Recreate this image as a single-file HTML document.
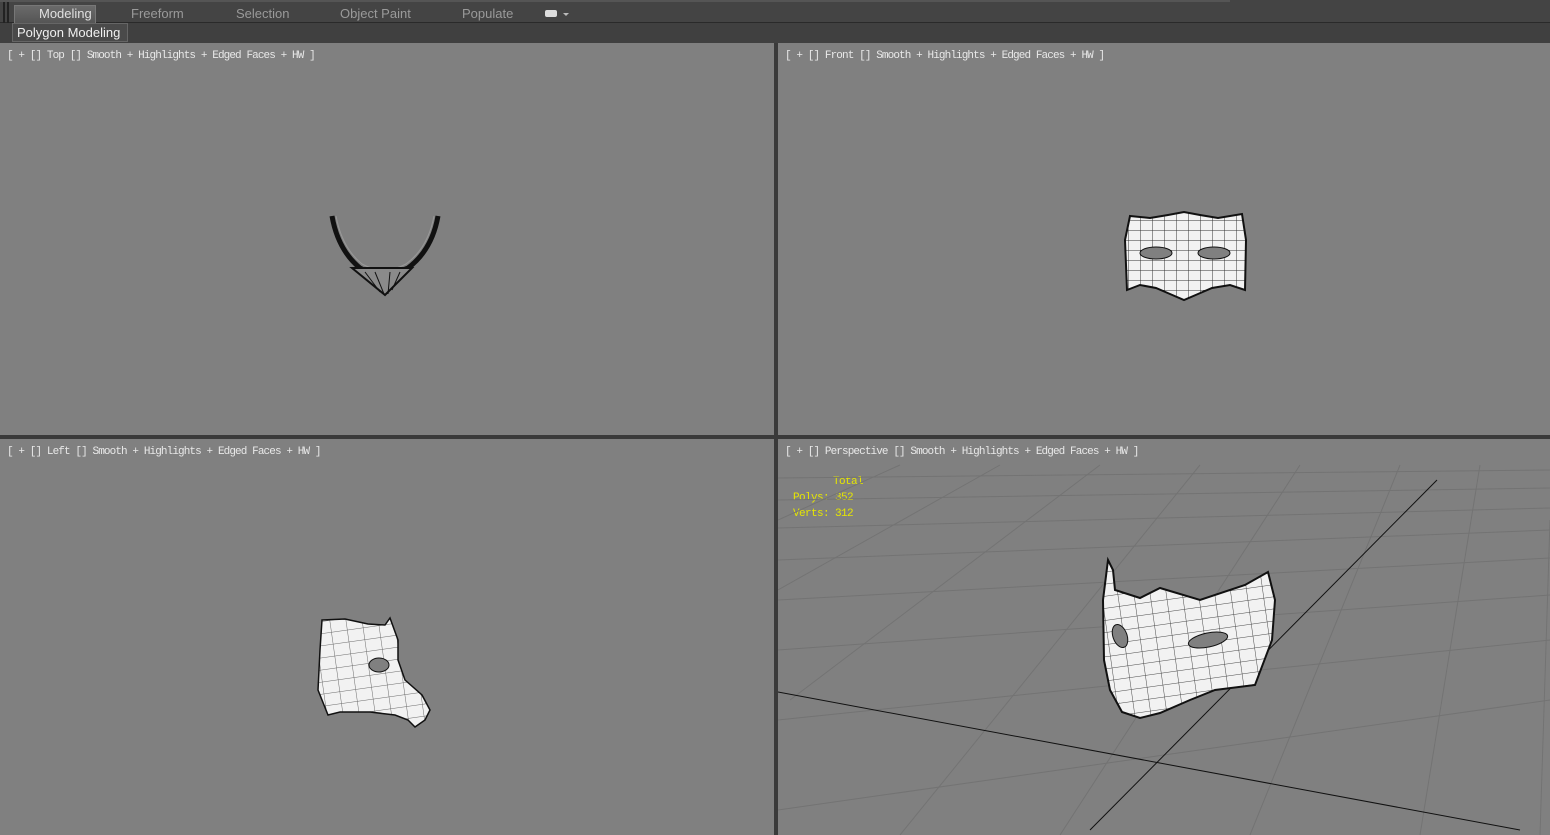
<!DOCTYPE html>
<html><head><meta charset="utf-8"><style>
*{margin:0;padding:0;box-sizing:border-box}
body{width:1550px;height:835px;background:#3a3a3a;position:relative;overflow:hidden;font-family:"Liberation Sans",sans-serif}
.bar1{position:absolute;left:0;top:0;width:1550px;height:23px;background:#444;border-bottom:1px solid #2a2a2a}
.bar2{position:absolute;left:0;top:23px;width:1550px;height:20px;background:#404040}
.tab{position:absolute;top:6px;font-size:13px;color:#9a9a9a}
.vp{position:absolute;background:#808080;overflow:hidden}
.lbl{position:absolute;left:7px;top:7px;font-family:"Liberation Mono",monospace;font-size:11px;color:#e8e8e8;white-space:pre;letter-spacing:-0.9px}
.stat{position:absolute;font-family:"Liberation Mono",monospace;font-size:11px;color:#e6e600;letter-spacing:-0.6px}
</style></head><body>
<div class="bar1">
 <div style="position:absolute;left:3px;top:2px;width:2px;height:38px;background:#222"></div>
 <div style="position:absolute;left:7px;top:2px;width:2px;height:38px;background:#222"></div>
 <div style="position:absolute;left:14px;top:5px;width:82px;height:18px;background:linear-gradient(#6a6a6a,#555);border:1px solid #777;border-bottom:none"></div>
 <div class="tab" style="left:39px;color:#e0e0e0">Modeling</div>
 <div class="tab" style="left:131px">Freeform</div>
 <div class="tab" style="left:236px">Selection</div>
 <div class="tab" style="left:340px">Object Paint</div>
 <div class="tab" style="left:462px">Populate</div>
 <div style="position:absolute;left:545px;top:10px;width:12px;height:7px;background:#ddd;border-radius:2px"></div>
 <div style="position:absolute;left:563px;top:13px;width:0;height:0;border-left:3px solid transparent;border-right:3px solid transparent;border-top:3px solid #bbb"></div>
 <div style="position:absolute;left:0;top:0;width:1230px;height:2px;background:#555"></div>
</div>
<div class="bar2">
 <div style="position:absolute;left:12px;top:0;width:116px;height:19px;background:#4a4a4a;border:1px solid #666"></div>
 <div style="position:absolute;left:17px;top:2px;font-size:13px;color:#f0f0f0">Polygon Modeling</div>
</div>

<div class="vp" style="left:0;top:43px;width:774px;height:392px"><div class="lbl">[ + [] Top [] Smooth + Highlights + Edged Faces + HW ]</div></div>
<div class="vp" style="left:778px;top:43px;width:772px;height:392px"><div class="lbl">[ + [] Front [] Smooth + Highlights + Edged Faces + HW ]</div></div>
<div class="vp" style="left:0;top:439px;width:774px;height:396px"><div class="lbl">[ + [] Left [] Smooth + Highlights + Edged Faces + HW ]</div></div>
<div class="vp" style="left:778px;top:439px;width:772px;height:396px"><div class="lbl">[ + [] Perspective [] Smooth + Highlights + Edged Faces + HW ]</div>
 <div class="stat" style="left:55px;top:37px">Total</div>
 <div class="stat" style="left:15px;top:53px">Polys: 352</div>
 <div class="stat" style="left:15px;top:69px">Verts: 312</div>
</div>

<svg width="1550" height="835" style="position:absolute;left:0;top:0">
<defs>
 <clipPath id="persp"><rect x="778" y="460" width="772" height="375"/></clipPath>
 <pattern id="g" width="12" height="10" patternUnits="userSpaceOnUse"><path d="M0 0H12M0 0V10" stroke="#111" stroke-width="1" fill="none"/></pattern>
 <pattern id="g2" width="16" height="12" patternUnits="userSpaceOnUse" patternTransform="rotate(-8)"><path d="M0 0H16M0 0V12" stroke="#111" stroke-width="1" fill="none"/></pattern>
</defs>
<g clip-path="url(#persp)" stroke="#737373" stroke-width="1" fill="none">
 <path d="M778 478 L1550 470"/><path d="M778 500 L1550 488"/><path d="M778 528 L1550 508"/><path d="M778 560 L1550 530"/><path d="M778 600 L1550 558"/><path d="M778 650 L1550 595"/><path d="M778 720 L1550 640"/><path d="M778 810 L1550 700"/>
 <path d="M900 465 L778 520"/><path d="M1000 465 L778 590"/><path d="M1100 465 L790 700"/><path d="M1200 465 L900 835"/><path d="M1300 465 L1060 835"/><path d="M1400 465 L1250 835"/><path d="M1480 465 L1420 835"/><path d="M1550 520 L1540 835"/>
</g>
<g clip-path="url(#persp)" stroke="#111" stroke-width="1">
 <path d="M778 692 L1520 830"/><path d="M1437 480 L1090 830"/>
</g>
<g fill="none" stroke="#111">
 <path d="M332 216 Q338 250 360 268 Q380 280 408 268 Q432 250 438 216" stroke-width="5"/>
 <path d="M336 216 Q342 248 362 264 Q384 276 406 264 Q428 248 434 216" stroke="#999" stroke-width="1"/>
 <path d="M352 268 L385 295 L412 268 Z" fill="#8a8a8a" stroke-width="2"/>
 <path d="M365 272 L380 292 M375 272 L384 294 M390 272 L388 294 M400 272 L392 290" stroke-width="1"/>
</g>
<path d="M1130 216 L1150 218 L1168 215 L1184 212 L1200 215 L1218 218 L1242 214 L1246 240 L1245 290 L1230 285 L1212 288 L1198 294 L1184 300 L1170 294 L1156 288 L1140 285 L1127 290 L1125 240 Z" fill="#f2f2f2" stroke="#111" stroke-width="2"/>
<path d="M1130 216 L1150 218 L1168 215 L1184 212 L1200 215 L1218 218 L1242 214 L1246 240 L1245 290 L1230 285 L1212 288 L1198 294 L1184 300 L1170 294 L1156 288 L1140 285 L1127 290 L1125 240 Z" fill="url(#g)" opacity="0.85"/>
<ellipse cx="1156" cy="253" rx="16" ry="6" fill="#808080" stroke="#111"/>
<ellipse cx="1214" cy="253" rx="16" ry="6" fill="#808080" stroke="#111"/>
<path d="M322 620 L345 619 L368 624 L385 625 L390 618 L398 640 L398 660 L405 680 L422 695 L430 710 L425 720 L415 727 L408 720 L395 715 L370 712 L340 712 L328 715 L318 690 L320 650 Z" fill="#f2f2f2" stroke="#111" stroke-width="1.5"/>
<path d="M322 620 L345 619 L368 624 L385 625 L390 618 L398 640 L398 660 L405 680 L422 695 L430 710 L425 720 L415 727 L408 720 L395 715 L370 712 L340 712 L328 715 L318 690 L320 650 Z" fill="url(#g2)" opacity="0.6"/>
<ellipse cx="379" cy="665" rx="10" ry="7" fill="#808080" stroke="#111"/>
<path d="M1108 560 L1113 570 L1115 590 L1140 598 L1160 588 L1200 600 L1245 585 L1268 572 L1275 600 L1272 640 L1255 685 L1215 690 L1190 700 L1160 713 L1140 718 L1122 712 L1110 690 L1104 660 L1103 600 Z" fill="#f2f2f2" stroke="#111" stroke-width="2"/>
<path d="M1108 560 L1113 570 L1115 590 L1140 598 L1160 588 L1200 600 L1245 585 L1268 572 L1275 600 L1272 640 L1255 685 L1215 690 L1190 700 L1160 713 L1140 718 L1122 712 L1110 690 L1104 660 L1103 600 Z" fill="url(#g2)" opacity="0.75"/>
<ellipse cx="1120" cy="636" rx="7" ry="12" fill="#808080" stroke="#111" transform="rotate(-20 1120 636)"/>
<ellipse cx="1208" cy="640" rx="20" ry="7" fill="#808080" stroke="#111" transform="rotate(-12 1208 640)"/>
</svg>
</body></html>
